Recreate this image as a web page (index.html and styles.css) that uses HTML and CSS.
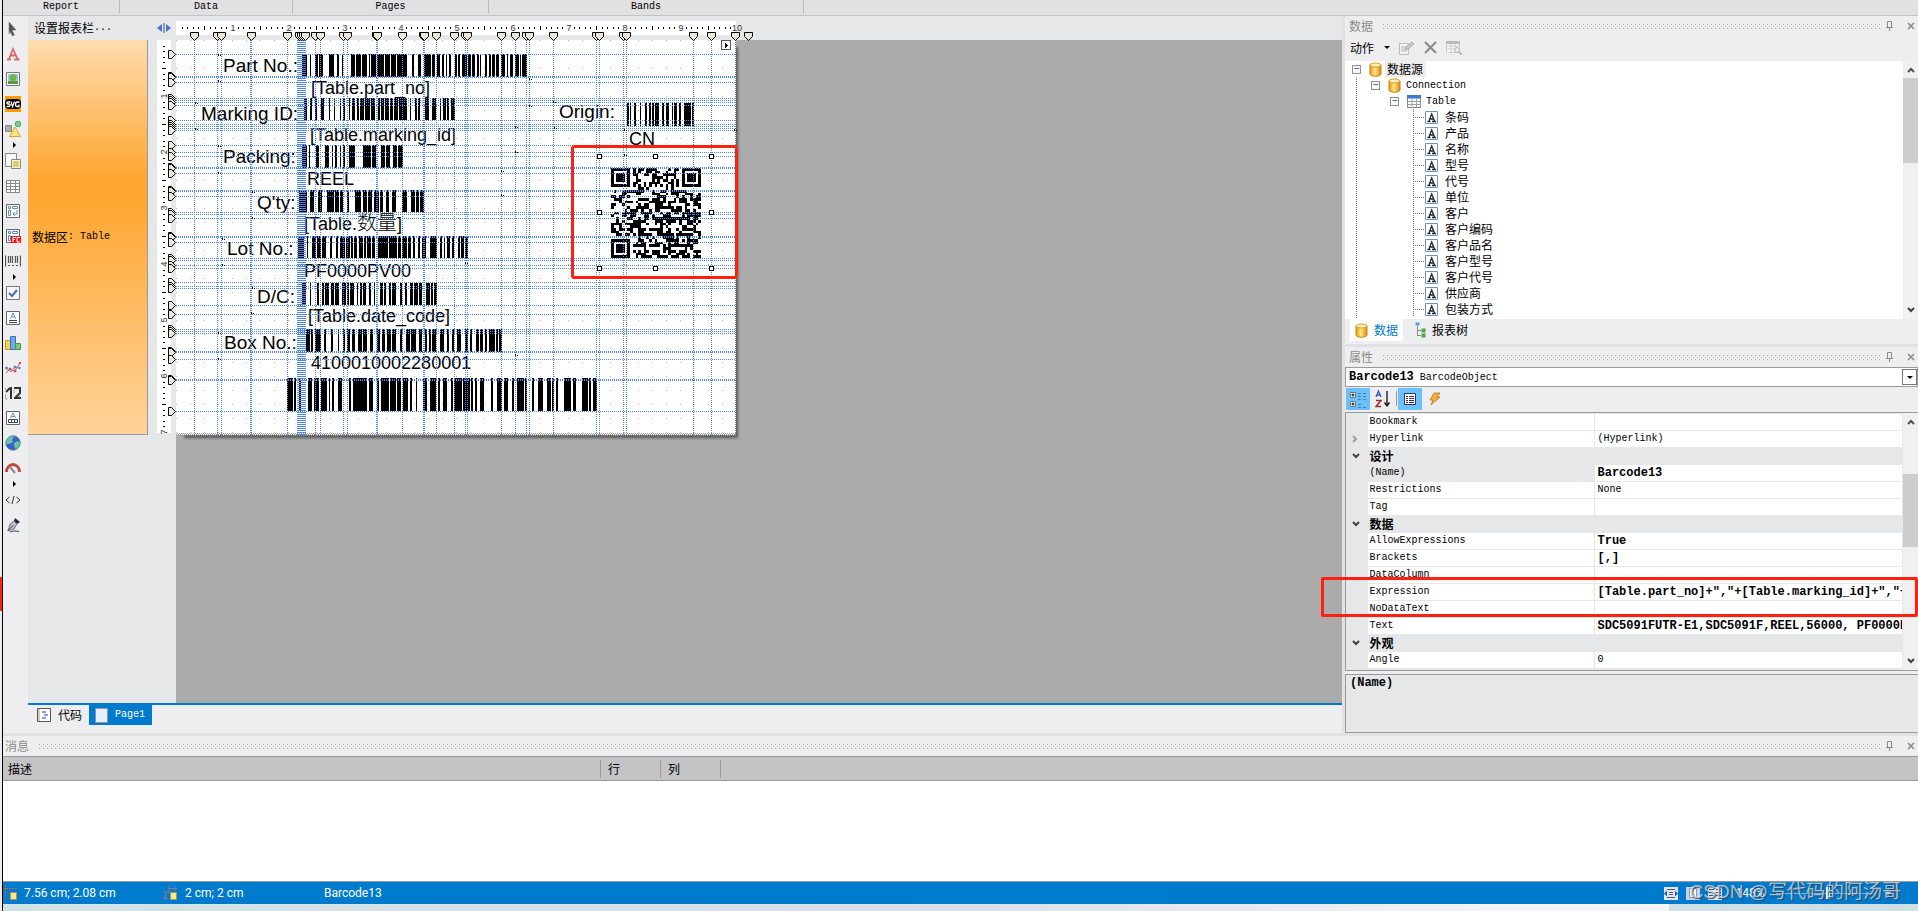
FILE: index.html
```html
<!DOCTYPE html>
<html lang="zh-CN">
<head>
<meta charset="utf-8">
<title>Report Designer</title>
<link rel="stylesheet" href="styles.css">
</head>
<body>
<svg class="defs" aria-hidden="true">
  <defs>
    <linearGradient id="gold" x1="0" x2="1"><stop offset="0" stop-color="#e59a10"/><stop offset=".45" stop-color="#ffe38a"/><stop offset="1" stop-color="#d98c0c"/></linearGradient>
    <symbol id="db" viewBox="0 0 13 15"><path d="M1 3v9c0 3 11 3 11 0V3z" fill="url(#gold)" stroke="#c9820c"/><ellipse cx="6.500" cy="3" rx="5.500" ry="2" fill="#fff0b8" stroke="#d9981c"/></symbol>
    <symbol id="field" viewBox="0 0 13 13"><path d="M.5 .5h12v12H.5z" fill="#fff" stroke="#6f93bd"/><path d="M2.500 10.500h3M7 10.500h4M4 10l2.700-7 2.800 7M5 8h3" fill="none" stroke="#1a2438" stroke-width="1.300"/></symbol>
    <symbol id="tbl" viewBox="0 0 14 13"><path d="M.5 .5h13v12H.5z" fill="#fff" stroke="#7d8794"/><path d="M0 0h14v3.500H0z" fill="#3f76d8"/><path d="M5 3v10M9.500 3v10M0 6.500h14M0 9.500h14" stroke="#98a2ae"/></symbol>
    <symbol id="pin" viewBox="0 0 7 10"><path d="M1.500 6V.5h4V6M0 6.500h7M3.500 7v3" fill="none" stroke="#8a8a8a"/></symbol>
    <symbol id="cross" viewBox="0 0 8 8"><path d="M1 1l6 6M7 1L1 7" stroke="#8a8a8a" stroke-width="1.500"/></symbol>
    <symbol id="up" viewBox="0 0 8 6"><path d="M1 5l3-3 3 3" fill="none" stroke="#505050" stroke-width="2"/></symbol>
    <symbol id="down" viewBox="0 0 8 6"><path d="M1 1l3 3 3-3" fill="none" stroke="#404040" stroke-width="2"/></symbol>
    <symbol id="right" viewBox="0 0 6 8"><path d="M1 1l3 3-3 3" fill="none" stroke="#a0a0a0" stroke-width="2"/></symbol>
  </defs>
</svg>
<div class="edge"><i></i></div>
<div class="app">
  <nav class="groups">
    <span class="g-report">Report</span><span class="g-data">Data</span><span class="g-pages">Pages</span><span class="g-bands">Bands</span>
  </nav>

  <main class="main">
    <div class="tools" role="toolbar" aria-label="Objects">
      <button aria-label="Select"><svg viewBox="0 0 16 16"><path d="M4 1l7 8-4 .3 2.500 4.700-2 1L5 10.500 4 13z" fill="#555" stroke="#777" stroke-width=".5"/></svg></button>
      <button aria-label="Text"><svg viewBox="0 0 16 16"><path d="M2 13.500h4M9 13.500h5.500M4 13L8 3l4.500 10M5.500 9.500h5" fill="none" stroke="#d9686a" stroke-width="1.800"/></svg></button>
      <button aria-label="Picture"><svg viewBox="0 0 16 16"><path d="M1.500 1.500h13v13h-13z" fill="#fff" stroke="#777"/><path d="M3 3h10v10H3z" fill="#9dc8ee"/><path d="M3 10h10v3H3z" fill="#5a9a3a"/><circle cx="8" cy="6.500" r="3.500" fill="#6cba45"/><path d="M8 9v3" stroke="#a86"/></svg></button>
      <button aria-label="SVG"><svg viewBox="0 0 16 16"><path d="M0 0h16v16H0z" fill="#ff9a00"/><rect y="3" width="16" height="10" rx="4" fill="#000"/><path d="M5 6H3c-1.500 0-1.500 2 0 2h1c1.500 0 1.500 2.500-.3 2.500H1.500M6 5.500l1.500 5L9.500 5.500M14.500 6H12c-2 0-2 4.500 0 4.500h2V8.500" fill="none" stroke="#fff" stroke-width="1.300"/></svg></button>
      <button aria-label="Shapes"><svg viewBox="0 0 16 16"><path d="M.5 4.500h6v6h-6z" fill="#aaa" stroke="#888"/><circle cx="13" cy="3" r="2.800" fill="#7ed08e" stroke="#4ca864"/><path d="M10 6l5.500 9.500h-11z" fill="#ffe27a" stroke="#d6a53c"/></svg></button>
      <button class="more" aria-label="More shapes"></button>
      <button aria-label="Subreport"><svg viewBox="0 0 16 16"><path d="M.5 .5h11v13H.5z" fill="#f8f8fa" stroke="#888"/><path d="M6.500 6.500h9v9h-9z" fill="#fff7b4" stroke="#888"/><path d="M8 9h6M8 11h6M8 13h6" stroke="#b5a044"/></svg></button>
      <button aria-label="Table"><svg viewBox="0 0 16 16"><path d="M1.500 2.500h13v12h-13zM1 5.500h14M1 8.500h14M1 11.500h14M5.500 2v12M10.500 2v12" fill="#fff" stroke="#888"/></svg></button>
      <button aria-label="Matrix"><svg viewBox="0 0 16 16"><path d="M1.500 1.500h13v13h-13z" fill="#fff" stroke="#666"/><path d="M3.500 3.500h2v2h-2zM7.500 3.500h5v2h-5zM3.500 7.500h2v5h-2zM12 7v4H8M9.500 9L8 11l2 2" fill="none" stroke="#5c8cc6"/></svg></button>
      <button aria-label="Advanced matrix"><svg viewBox="0 0 16 16"><path d="M1.500 1.500h13v13h-13z" fill="#fff" stroke="#666"/><path d="M3.500 3.500h2v2h-2zM7.500 3.500h5v2h-5zM3.500 7.500h2v5h-2z" fill="none" stroke="#5c8cc6"/><path d="M6 8h10v7H6z" fill="#f11"/><path d="M8 14V9.500h3M8 11.500h2M15 9.500h-3V14h3" fill="none" stroke="#fff"/></svg></button>
      <button aria-label="Barcode"><svg viewBox="0 0 16 16"><path d="M.5 2.500v11M3.500 3v7M5.500 3v7M7.500 3v7M10.500 3v7M12.500 3v7M15.500 2.500v11M3 12.500h2M7 12.500h2M11 12.500h2" stroke="#555" stroke-width="1.200"/></svg></button>
      <button class="more" aria-label="More barcodes"></button>
      <button aria-label="Check box"><svg viewBox="0 0 16 16"><path d="M1.500 1.500h13v13h-13z" fill="#f4f6fa" stroke="#777"/><path d="M4 8l3 3 5-6" fill="none" stroke="#4c6ea8" stroke-width="2"/></svg></button>
      <button aria-label="Rich text"><svg viewBox="0 0 16 16"><path d="M1.500 1.500h13v13h-13z" fill="#fff" stroke="#666"/><path d="M5.500 8.500L8 3l2.500 5.500M6.500 7h3" fill="none" stroke="#5c8cc6"/><path d="M4 10.500h8M4 12.500h8" stroke="#444"/></svg></button>
      <button aria-label="Chart"><svg viewBox="0 0 16 16"><path d="M.5 5.500h5v9h-5z" fill="#f6d255" stroke="#c89b20"/><path d="M5.500 1.500h5v13h-5z" fill="#6eaaf0" stroke="#3470bc"/><path d="M10.500 8.500h5v6h-5z" fill="#7ec87a" stroke="#469446"/></svg></button>
      <button aria-label="Sparkline"><svg viewBox="0 0 16 16"><path d="M1 13l4-4 5 2 5-8" fill="none" stroke="#e55" /><path d="M1 8l5 4 4-5 5 1" fill="none" stroke="#69c"/><g fill="#e44"><circle cx="5" cy="9" r="1.500"/><circle cx="10" cy="11" r="1.500"/><circle cx="15" cy="3" r="1.200"/></g><g fill="#58b"><circle cx="1.500" cy="8" r="1.500"/><circle cx="10" cy="7" r="1.500"/><circle cx="14.500" cy="8" r="1.200"/></g></svg></button>
      <button aria-label="Digits"><svg viewBox="0 0 16 16"><path d="M.5 9v5h2M.5 3v2M9 8V5M11 12l3-3v4" fill="none" stroke="#aaa"/><path d="M1 7l4-4M6 2v12M9 3h6v5l-5 5M9 13h7" fill="none" stroke="#333" stroke-width="2"/></svg></button>
      <button aria-label="Cellular text"><svg viewBox="0 0 16 16"><path d="M1.500 1.500h13v13h-13z" fill="#fff" stroke="#666"/><path d="M5.500 8L8 3l2.500 5M6.500 6.500h3" fill="none" stroke="#5c8cc6"/><path d="M3.500 9.500h9v3h-9zM6.500 9v4M9.500 9v4" fill="none" stroke="#444"/></svg></button>
      <button aria-label="Map"><svg viewBox="0 0 16 16"><circle cx="8" cy="8" r="7.200" fill="#3a5fd0" stroke="#4a8a80"/><path d="M3 3c2-2 5-2 6-1L7 5l1 2-4 2-3 0C1 6 2 4 3 3zM9 8l4-2 2 2c0 3-2 5-4 6l-2-3z" fill="#66c3a0"/></svg></button>
      <button aria-label="Gauge"><svg viewBox="0 0 16 16"><path d="M1.500 12a6.500 7.500 0 0 1 13 0" fill="none" stroke="#c0483c" stroke-width="2.800"/><path d="M5 7l5 6" stroke="#888" stroke-width="2"/></svg></button>
      <button class="more" aria-label="More gauges"></button>
      <button aria-label="HTML"><svg viewBox="0 0 16 16"><path d="M4.500 5L1 8l3.500 3M11.500 5L15 8l-3.500 3M9 4L7 12" fill="none" stroke="#333"/></svg></button>
      <button aria-label="Signature"><svg viewBox="0 0 16 16"><path d="M10 1l5 4-3 2-3-3z" fill="#1c2452"/><path d="M9 4l3 3-3 5-6 2 2-7z" fill="#b9bec6" stroke="#555" stroke-width=".7"/><path d="M3 13.500l5-5M5 15c4-1.500 6-1 9-.5" fill="none" stroke="#345"/></svg></button>
    </div>

    <section class="work">
      <div class="designer">
        <div class="bands">
          <button class="cfg"><span class="zh">设置报表栏</span><span>...</span></button>
          <div class="band"><span class="zh">数据区</span>: Table</div>
        </div>
        <div class="canvas">
          <svg class="sheet" viewBox="157 16 603 430" width="603" height="430">
            <defs>
              <pattern id="dots" x="176" y="40" width="14" height="14" patternUnits="userSpaceOnUse"><path d="M0 0h1v1H0z" fill="#b8b8b8"/></pattern>
              <pattern id="check" width="2" height="2" patternUnits="userSpaceOnUse"><path d="M0 0h1v1H0zM1 1h1v1H1z" fill="#999"/></pattern>
              <filter id="soft"><feGaussianBlur stdDeviation="1.500"/></filter>
            </defs>
            <path d="M184 47h554v391H184z" fill="#555" filter="url(#soft)"/>
            <g shape-rendering="crispEdges">
              <path d="M176 21h560v14H176zM157 40h14v393h-14z" fill="#fff"/>
              <path d="M176 40h560v395H176z" fill="#fff"/>
              <path d="M176 40h560v395H176z" fill="url(#dots)"/>
              <path d="M176 433h560v3H176z" fill="url(#check)"/>
              <g id="bars"></g>
              <g id="qr"></g>
            </g>
            <path d="M162 24v8l-5-4zM166 24v8l5-4z" fill="#3f76d0"/><path d="M164 23v10" stroke="#999" stroke-width="2"/>
            <g class="lbl">
              <text x="223" y="72">Part No.:</text><text x="201" y="120">Marking ID:</text><text x="223" y="163">Packing:</text>
              <text x="257" y="209">Q'ty:</text><text x="227" y="255">Lot No.:</text><text x="257" y="303">D/C:</text><text x="224" y="349">Box No.:</text>
              <text x="559" y="118">Origin:</text>
            </g>
            <g class="val">
              <text x="311" y="94">[Table.part_no]</text><text x="310" y="141">[Table.marking_id]</text><text x="307" y="185">REEL</text>
              <text x="304" y="230">[Table.<tspan class="big">数量</tspan>]</text><text x="304" y="277">PF0000PV00</text><text x="308" y="322">[Table.date_code]</text>
              <text x="311" y="369">4100010002280001</text><text x="629" y="145">CN</text>
            </g>
            <g id="guides" shape-rendering="crispEdges"></g>
            <g id="ticks" shape-rendering="crispEdges"></g>
            <g id="nums" class="num"></g>
            <g id="pins" fill="#ece8d8" stroke="#000"></g>
            <g shape-rendering="crispEdges">
              <path d="M721.500 40.500h9v9h-9z" fill="#fff" stroke="#555"/><path d="M725 43v5l3-2.500z"/>
            </g>
            <g id="handles" fill="#fff" stroke="#000" shape-rendering="crispEdges"></g>
            <rect x="572.500" y="146.500" width="164" height="131" rx="2" fill="none" stroke="#ff2010" stroke-width="3"/>
          </svg>
        </div>
      </div>
      <div class="tabs">
        <button class="tab"><svg viewBox="0 0 14 14" width="14" height="14"><path d="M.5 .5h13v13H.5z" fill="#fff" stroke="#555"/><path d="M1 1h2v12H1z" fill="#d8d0a0"/><path d="M5 4h4M7 7h4M5 10h4" stroke="#23f"/></svg><span class="zh">代码</span></button>
        <button class="tab on"><svg viewBox="0 0 13 15" width="13" height="15"><path d="M.5 .5h12v14H.5z" fill="#e8eefa" stroke="#8a96a8"/></svg>Page1</button>
      </div>
    </section>

    <aside class="side">
      <section class="panel data">
        <header class="head"><h2>数据</h2><i></i><svg width="7" height="10"><use href="#pin"/></svg><svg width="8" height="8"><use href="#cross"/></svg></header>
        <div class="bar">
          <button class="act"><span class="zh">动作</span><b></b></button>
          <button aria-label="Edit"><svg viewBox="0 0 16 14" width="16" height="14"><path d="M.5 2.500h9v11h-9z" fill="#f4f4f4" stroke="#bbb"/><path d="M2 6h5M2 8h4M2 10h6" stroke="#bbb"/><path d="M6 9l1-3 6-5 2 2-6 5z" fill="#ccc" stroke="#aaa"/></svg></button>
          <button aria-label="Delete"><svg viewBox="0 0 13 13" width="13" height="13"><path d="M1 1l11 11M12 1L1 12" stroke="#8a8a8a" stroke-width="2"/></svg></button>
          <button aria-label="View"><svg viewBox="0 0 16 14" width="16" height="14"><path d="M.5 .5h13v11H.5zM0 5h14M0 8h14M5 3v9M9 3v9" fill="#fafafa" stroke="#ccc"/><path d="M0 0h14v3H0z" fill="#bbb"/><circle cx="11" cy="9" r="2.500" fill="#eee" stroke="#bbb"/><path d="M13 11l3 3" stroke="#bbb" stroke-width="2"/></svg></button>
        </div>
        <div class="scroller">
          <ul class="tree">
            <li class="l0"><button aria-label="Collapse">−</button><svg width="13" height="15"><use href="#db"/></svg><span class="zh sel">数据源</span></li>
            <li class="l1"><button aria-label="Collapse">−</button><svg width="13" height="15"><use href="#db"/></svg><span>Connection</span></li>
            <li class="l2"><button aria-label="Collapse">−</button><svg width="14" height="13"><use href="#tbl"/></svg><span>Table</span></li>
            <li class="leaf"><svg width="13" height="13"><use href="#field"/></svg><span>条码</span></li>
            <li class="leaf"><svg width="13" height="13"><use href="#field"/></svg><span>产品</span></li>
            <li class="leaf"><svg width="13" height="13"><use href="#field"/></svg><span>名称</span></li>
            <li class="leaf"><svg width="13" height="13"><use href="#field"/></svg><span>型号</span></li>
            <li class="leaf"><svg width="13" height="13"><use href="#field"/></svg><span>代号</span></li>
            <li class="leaf"><svg width="13" height="13"><use href="#field"/></svg><span>单位</span></li>
            <li class="leaf"><svg width="13" height="13"><use href="#field"/></svg><span>客户</span></li>
            <li class="leaf"><svg width="13" height="13"><use href="#field"/></svg><span>客户编码</span></li>
            <li class="leaf"><svg width="13" height="13"><use href="#field"/></svg><span>客户品名</span></li>
            <li class="leaf"><svg width="13" height="13"><use href="#field"/></svg><span>客户型号</span></li>
            <li class="leaf"><svg width="13" height="13"><use href="#field"/></svg><span>客户代号</span></li>
            <li class="leaf"><svg width="13" height="13"><use href="#field"/></svg><span>供应商</span></li>
            <li class="leaf"><svg width="13" height="13"><use href="#field"/></svg><span>包装方式</span></li>
          </ul>
          <div class="vs"><svg width="8" height="6"><use href="#up"/></svg><b class="t1"></b><svg width="8" height="6"><use href="#down"/></svg></div>
        </div>
        <div class="ptabs">
          <button class="on"><svg width="13" height="15"><use href="#db"/></svg>数据</button>
          <button><svg viewBox="0 0 11 16" width="11" height="16"><path d="M2.500 4v10M3 8.500h3M3 13.500h3" fill="none" stroke="#888"/><path d="M.5 .5h4v3h-4z" fill="#5b9be8"/><path d="M6.500 6.500h4v4h-4zM6.500 11.500h4v4h-4z" fill="#4aa84a"/></svg>报表树</button>
        </div>
      </section>

      <section class="panel props">
        <header class="head"><h2>属性</h2><i></i><svg width="7" height="10"><use href="#pin"/></svg><svg width="8" height="8"><use href="#cross"/></svg></header>
        <button class="combo"><span><b>Barcode13</b> BarcodeObject</span><i></i></button>
        <div class="pbar">
          <button class="on" aria-label="Categorized"><svg viewBox="0 0 18 18" width="18" height="18"><path d="M1.500 2.500h5v5h-5zM1.500 11.500h5v5h-5z" fill="#fff" stroke="#777"/><path d="M2.500 5h3M4 3.500v3M2.500 14h3M4 12.500v3" stroke="#000"/><path d="M9 3.500h3M14 3.500h3M9 6.500h3M14 6.500h3M9 9.500h3M14 9.500h3M9 14.500h3M9 17.500h3M14 17.500h3" stroke="#4c80a8"/></svg></button>
          <button aria-label="Alphabetical"><svg viewBox="0 0 16 18" width="16" height="18"><path d="M1 7l2.500-6L6 7M2 5h3" fill="none" stroke="#2a56c0" stroke-width="1.300"/><path d="M1 10.500h5l-5 6h5" fill="none" stroke="#a02828" stroke-width="1.500"/><path d="M12 1v14M9.500 12.500L12 16l2.500-3.500" fill="none" stroke="#111" stroke-width="1.300"/></svg></button>
          <i></i>
          <button class="on" aria-label="Properties"><svg viewBox="0 0 14 14" width="14" height="14"><path d="M1.500 1.500h11v11h-11z" fill="#fff" stroke="#335"/><path d="M3 4.500h2M6 4.500h5M3 6.500h2M6 6.500h5M3 8.500h2M6 8.500h5M3 10.500h2M6 10.500h5" stroke="#335"/></svg></button>
          <button aria-label="Events"><svg viewBox="0 0 12 14" width="12" height="14"><path d="M5 1h6L8 5h3L2 13l2-5H1z" fill="#ffb02e" stroke="#b5651d" stroke-width=".7"/></svg></button>
        </div>
        <div class="gridbox">
          <table class="grid">
            <tbody>
            <tr><th></th><td>Bookmark</td><td></td></tr>
            <tr><th><svg width="6" height="8"><use href="#right"/></svg></th><td>Hyperlink</td><td>(Hyperlink)</td></tr>
            <tr class="cat"><th><svg width="8" height="6"><use href="#down"/></svg></th><td colspan="2">设计</td></tr>
            <tr class="cur"><th></th><td>(Name)</td><td><b>Barcode13</b></td></tr>
            <tr><th></th><td>Restrictions</td><td>None</td></tr>
            <tr><th></th><td>Tag</td><td></td></tr>
            <tr class="cat"><th><svg width="8" height="6"><use href="#down"/></svg></th><td colspan="2">数据</td></tr>
            <tr><th></th><td>AllowExpressions</td><td><b>True</b></td></tr>
            <tr><th></th><td>Brackets</td><td><b>[,]</b></td></tr>
            <tr><th></th><td>DataColumn</td><td></td></tr>
            <tr><th></th><td>Expression</td><td><b>[Table.part_no]+","+[Table.marking_id]+","+"</b></td></tr>
            <tr><th></th><td>NoDataText</td><td></td></tr>
            <tr><th></th><td>Text</td><td><b>SDC5091FUTR-E1,SDC5091F,REEL,56000, PF0000PV00</b></td></tr>
            <tr class="cat"><th><svg width="8" height="6"><use href="#down"/></svg></th><td colspan="2">外观</td></tr>
            <tr><th></th><td>Angle</td><td>0</td></tr>
            </tbody>
          </table>
          <div class="vs"><svg width="8" height="6"><use href="#up"/></svg><b class="t2"></b><svg width="8" height="6"><use href="#down"/></svg></div>
          <div class="mark"></div>
        </div>
        <div class="help"><b>(Name)</b></div>
      </section>
    </aside>
  </main>

  <section class="msgs">
    <header class="head"><h2>消息</h2><i></i><svg width="7" height="10"><use href="#pin"/></svg><svg width="8" height="8"><use href="#cross"/></svg></header>
    <table class="log"><thead><tr><th class="c1">描述</th><th class="c2">行</th><th class="c2">列</th><th></th></tr></thead></table>
  </section>

  <footer class="status">
    <span class="s1"><svg viewBox="0 0 14 16" width="14" height="16"><path d="M2.500 0v16M0 3.500h14" stroke="#b06a50" stroke-dasharray="2 1"/><path d="M7.500 7.500h6v7h-6z" fill="#ffe98a" stroke="#a8955a"/></svg>7.56 cm; 2.08 cm</span>
    <span class="s2"><svg viewBox="0 0 15 16" width="15" height="16"><path d="M6 3.500h8M11 1l3 2.500L11 6M2.500 7v8M0 12l2.500 3L5 12M6 0v7M0 7h7" fill="none" stroke="#8a7a80"/><path d="M7.500 7.500h6v7h-6z" fill="#ffe98a" stroke="#a8955a"/></svg>2 cm; 2 cm</span>
    <span class="s3">Barcode13</span>
    <span class="zoom">
      <button aria-label="Page width"><svg viewBox="0 0 14 13" width="14" height="13"><path d="M0 0h14v13H0z" fill="#dfe6f2"/><path d="M3 2.500h8M3 10.500h8M5 5.500h4M5 7.500h4" stroke="#556"/><path d="M0 6.500l3-3v6zM14 6.500l-3-3v6z" fill="#2458b8"/></svg></button>
      <button aria-label="Whole page"><svg viewBox="0 0 14 13" width="14" height="13"><path d="M0 0h14v13H0z" fill="#c8d4ea"/><path d="M3.500 1.500h7v9h-7z" fill="#fff" stroke="#89a"/></svg></button>
      <button aria-label="Actual size"><svg viewBox="0 0 14 13" width="14" height="13"><path d="M0 0h14v13H0z" fill="#dfe6f2"/><path d="M1 2.500h5M8 2.500h5M1 5.500h5M8 5.500h5M1 8.500h5M8 8.500h5" stroke="#456"/></svg></button>
      <span class="pct">148%</span>
      <input type="range" min="0" max="100" value="52" aria-label="Zoom"><b>+</b>
    </span>
    <span class="wm">CSDN @写代码的阿汤哥</span>
  </footer>
  <div class="desk"></div>
</div>
<script src="app.js"></script>
</body>
</html>
```
FILE: styles.css
```css
* { box-sizing: border-box; }
body {
  margin: 0; height: 100vh; overflow: hidden; display: grid; grid-template-columns: 3px 1fr;
  font: 10px/16px "Liberation Mono", "Noto Sans CJK SC", monospace; color: #000; background: #eeeef0;
}
button { font: inherit; color: inherit; background: none; border: 0; padding: 0; margin: 0; display: flex; align-items: center; }
svg { flex: none; display: block; }
h2, ul { margin: 0; padding: 0; font-weight: normal; list-style: none; }
.defs { position: absolute; width: 0; height: 0; }
.zh, h2, .leaf, .ptabs, .cat, .log { font-family: "Noto Sans CJK SC", sans-serif; font-size: 12px; }

.edge { background: #ececee; border-right: 1px solid #000; padding-top: 577px; }
.edge i { display: block; height: 34px; background: #f21; }
.app { display: flex; flex-direction: column; min-width: 0; height: 100vh; }

.groups { display: flex; height: 16px; background: #e1e1e4; border-bottom: 1px solid #c4c4c7; line-height: 13px; text-align: center; flex: none; }
.groups span { border-right: 1px solid #bbbbbe; height: 13px; }
.g-report { width: 117px; } .g-data { width: 173px; } .g-pages { width: 196px; } .g-bands { width: 315px; }

.main { flex: 1; display: flex; min-height: 0; background: #eeeef0; border-bottom: 3px solid #e1e1e4; }
.tools { width: 25px; display: flex; flex-direction: column; background: #eeeef1; }
.tools button { width: 20px; height: 25px; justify-content: center; }
.tools button svg { width: 16px; height: 16px; }
.tools .more { height: 7px; width: 22px; }
.more::after { content: ""; border: 3px solid transparent; border-left-color: #000; border-right: 0; }

.work { flex: 1; min-width: 0; display: flex; flex-direction: column; }
.designer { flex: 1; display: flex; min-height: 0; border-bottom: 2px solid #007acc; background: #e6e7e9; }
.bands { width: 129px; }
.cfg { height: 24px; padding-left: 6px; }
.band { width: 120px; height: 395px; padding-left: 4px; display: flex; align-items: center; border-right: 1px solid #999; border-bottom: 1px solid #999; background: linear-gradient(#ffdcb0, #ffa630 35%, #ffa630 40%, #ffd39b); }
.canvas { flex: 1; overflow: hidden; background: linear-gradient(#ababab, #ababab) 19px 24px no-repeat; }
.sheet { display: block; }
.lbl { font: 19px "Liberation Sans", Arial, sans-serif; }
.val { font: 18px "Liberation Sans", "Noto Sans CJK SC", sans-serif; }
.big { font-size: 20px; font-weight: 300; }
.num { font: 9px "Liberation Sans", sans-serif; fill: #333; text-anchor: middle; }
.tabs { display: flex; height: 28px; padding-left: 3px; }
.tab { height: 20px; padding: 0 7px 0 6px; gap: 7px; }
.tab.on { background: #007acc; color: #fff; }

.side { width: 576px; flex: none; border-left: 3px solid #e1e1e4; display: flex; flex-direction: column; }
.data { border-bottom: 3px solid #e1e1e4; }
.head { display: flex; align-items: center; height: 20px; padding-right: 3px; gap: 14px; }
.head h2 { color: #8c8c8c; padding-left: 4px; line-height: 20px; }
.head i { flex: 1; height: 5px; margin-right: -8px; margin-left: -4px; background: conic-gradient(at 1px 1px, transparent 75%, #a8a8aa 0) 0 0 / 4px 4px, conic-gradient(at 1px 1px, transparent 75%, #a8a8aa 0) 2px 2px / 4px 4px; }
.bar { display: flex; align-items: center; height: 25px; padding: 0 0 2px 5px; gap: 9px; }
.act { gap: 10px; }
.act b { border: 3px solid transparent; border-top-color: #000; border-bottom: 0; }
.scroller { display: flex; height: 258px; background: #fff; }
.tree { flex: 1; overflow: hidden; background: repeating-linear-gradient(#777 0 1px, transparent 1px 2px) 11px 16px / 1px 100% no-repeat; }
.tree li { display: flex; align-items: center; height: 16px; }
.tree li span { padding-left: 5px; white-space: pre; }
.tree .l1 span, .tree .l2 span { padding-top: 2px; }
.tree .leaf span { padding-left: 7px; }
.tree .sel { background: #efefef; padding: 0 3px 0 2px; margin-left: 3px; line-height: 16px; }
.tree button { width: 9px; height: 9px; border: 1px solid #919191; justify-content: center; line-height: 7px; color: #24489c; margin-right: 8px; background: #fafafa; }
.l0 { padding-left: 7px; } .l1 { padding-left: 26px; } .l2 { padding-left: 45px; }
.leaf { margin-left: 68px; background: repeating-linear-gradient(#777 0 1px, transparent 1px 2px) 0 0 / 1px 100% no-repeat, repeating-linear-gradient(90deg, #777 0 1px, transparent 1px 2px) 0 8px / 11px 1px no-repeat; padding-left: 12px; }
.vs { width: 15px; background: #f0f0f0; display: flex; flex-direction: column; align-items: center; padding: 6px 0; }
.vs b { width: 100%; background: #cdcdcd; margin: 5px 0 auto; }
.t1 { height: 85px; }
.vs .t2 { height: 73px; margin-top: 49px; }
.ptabs { display: flex; height: 25px; padding-left: 5px; gap: 7px; }
.ptabs button { height: 22px; gap: 6px; padding: 0 5px; }
.ptabs .on { background: #fff; color: #007acc; }

.props { flex: 1; display: flex; flex-direction: column; min-height: 0; }
.combo { height: 20px; border: 1px solid #999; background: #fff; justify-content: space-between; padding-left: 3px; flex: none; }
.combo b, .grid td b, .help b { font-size: 12px; }
.combo i { width: 15px; height: 16px; border: 1px solid #777; display: flex; align-items: center; justify-content: center; }
.combo i::after { content: ""; border: 3px solid transparent; border-top-color: #000; border-bottom: 0; }
.pbar { display: flex; align-items: center; height: 25px; padding-left: 1px; padding-bottom: 2px; gap: 1px; flex: none; }
.pbar button { width: 24px; height: 22px; justify-content: center; }
.pbar i { width: 1px; height: 15px; background: #999; }
.pbar .on { background: #6bc1ff; }
.gridbox { position: relative; display: flex; height: 259px; border: 1px solid #999; border-right: 0; background: #e6e7e9; flex: none; }
.grid { flex: 1; width: 100%; table-layout: fixed; border-collapse: collapse; align-self: flex-start; min-width: 0; }
.grid tr { height: 17px; }
.grid th { width: 21px; padding: 0 6px; border: 0; }
.grid td { padding: 0 0 0 3px; border: 1px solid #e6e7e9; background: #fff; white-space: nowrap; overflow: hidden; line-height: 14px; height: 17px; }
.grid td:nth-child(2) { width: 227px; padding-left: 2px; }
.grid .cat td, .grid .cur td:nth-child(2) { background: #e6e7e9; }
.grid .cat { font-weight: bold; }
.grid td b { display: block; line-height: 14px; }
.mark { position: absolute; left: -25px; right: 0; top: 164px; height: 40px; border: 3px solid #ff2010; border-radius: 2px; }
.help { flex: 1; margin-top: 3px; border: 1px solid #999; border-right: 0; background: #e6e7e9; padding: 0 4px; }

.msgs { height: 146px; flex: none; background: #fff; border-bottom: 1px solid #999; }
.msgs .head { background: #eeeef0; }
.msgs h2 { padding-left: 2px; }
.log { width: 100%; border-collapse: collapse; table-layout: fixed; background: #c4c4c6; border-top: 1px solid #999; border-bottom: 1px solid #999; }
.log th { height: 24px; padding: 0 5px; font-weight: normal; text-align: left; background: linear-gradient(#999, #999) right center / 1px 18px no-repeat; }
.log .c2 { padding-left: 7px; }
.log th:last-child { background: none; }
.c1 { width: 598px; } .c2 { width: 60px; }

.status { position: relative; display: flex; align-items: center; height: 22px; flex: none; background: #007acc; color: #fff; font: 12px/22px Roboto, "Open Sans", sans-serif; white-space: nowrap; }
.status span { display: flex; align-items: center; gap: 7px; }
.s1 { width: 160px; } .s2 { width: 161px; }
.zoom { margin-left: auto; padding-right: 27px; }
.status .zoom { gap: 8px; }
.pct { width: 38px; padding-left: 5px; }
.zoom input { appearance: none; width: 100px; height: 1px; background: #7fb8e0; margin: 0; }
.zoom input::-webkit-slider-thumb { appearance: none; width: 4px; height: 12px; background: #fff; }
.status .wm { position: absolute; right: 17px; top: -3px; font: 19px/26px "Liberation Sans", "Noto Sans CJK SC", sans-serif; color: rgba(225, 235, 245, .7); text-shadow: 1px 1px 1px #345; }
.desk { height: 7px; flex: none; background: linear-gradient(90deg, #cfe3e5, #dcdfe8 50%, #f3f4f6 78%, #f3f4f6 87%, #cfdfe6 87%); }
```
FILE: app.js
```js
const NS = 'http://www.w3.org/2000/svg';
const add = (id, tag, attrs, text) => {
  const el = document.createElementNS(NS, tag);
  for (const k in attrs) el.setAttribute(k, attrs[k]);
  if (text !== undefined) el.textContent = text;
  document.getElementById(id).appendChild(el);
};

// Barcodes: origin, top, bottom, bar runs in thirds of a pixel
const codes = [
  [160, 54, 77, '426-441 450-453 466-473 478-488 508-511 514-522 532-535 547-549 572-577 580-583 587-603 607-620 626-629 634-646 652-672 676-690 693-706 711-724 727-741 757-762 775-783 792-811 815-825 831-840 846-851 858-861 867-871 884-889 893-898 907-919 923-931 935-943 951-955 960-963 975-979 987-991 996-1004 1007-1015 1024-1033 1040-1043 1051-1058 1064-1075 1080-1083 1087-1100'],
  [160, 98, 120, '432-441 450-454 466-470 484-492 507-510 522-525 540-543 550-553 566-569 577-583 592-595 601-611 614-629 632-643 655-659 663-670 674-685 690-697 702-712 716-724 727-741 750-753 766-769 775-780 795-806 817-828 840-843 850-856 862-866 873-883'],
  [160, 145, 168, '426-440 447-450 468-476 495-506 516-519 525-530 540-543 550-553 568-577 580-583 610-619 622-633 636-646 663-675 678-688 700-710 714-718 721-727'],
  [160, 190, 212, '418-441 451-462 474-486 501-508 511-521 525-535 540-549 560-565 585-603 609-619 624-634 642-656 661-668 679-685 696-706 727-739 753-763 767-777 780-790'],
  [160, 236, 258, '415-432 441-444 456-468 471-483 487-497 510-515 528-532 540-553 558-568 573-578 582-590 598-608 612-618 622-632 636-643 654-670 673-684 687-697 700-710 714-722 727-741 745-753 760-765 775-779 786-797 810-829 841-844 851-855 862-869 877-882 894-899 903-911 915-922'],
  [160, 283, 305, '427-436 450-453 471-476 487-491 495-506 512-520 526-536 547-556 560-566 570-581 590-594 600-605 609-618 628-632 642-645 660-668 673-677 687-691 696-706 721-724 736-740 750-758 763-772 776-786 798-810 814-817 822-829'],
  [160, 329, 352, '438-449 454-458 466-481 491-497 513-519 533-537 549-553 560-570 577-583 594-604 608-620 629-638 652-658 666-674 680-691 697-706 720-726 738-748 752-768 776-786 796-800 806-812 817-827 840-850 860-866 877-882 891-901 914-924 930-936 949-955 961-967 975-980 988-1005 1008-1013 1017-1026'],
  [270, 378, 411, '52-68 71-76 87-93 114-126 132-147 152-171 177-180 186-192 204-216 237-243 249-271 274-291 297-309 322-327 333-355 360-376 381-393 399-414 420-426 438-441 459-470 480-498 504-510 519-531 543-549 552-576 580-600 603-607 614-621 630-642 663-669 681-696 702-714 726-732 741-761 765-771 786-792 804-819 831-843 846-851 858-863 882-903 909-918 936-954 957-962 969-981'],
  [530, 103, 126, '291-295 299-302 313-316 329-332 345-350 358-362 367-372 375-387 396-402 408-417 425-429 433-439 448-453 462-475 478-482 486-490']
];
for (const [ox, top, bottom, runs] of codes) {
  const d = runs.split(' ').map(r => {
    const [s, e] = r.split('-').map(v => ox + v / 3);
    const a = Math.round(s), b = Math.ceil(e);
    return `M${a} ${top}H${b}V${bottom}H${a}z`;
  }).join('');
  add('bars', 'path', { d });
}

// QR symbol, 33 modules on a 90px square
const N = 33, px = i => Math.round(i * 90 / N);
let seed = 7, q = '';
const rnd = () => (seed = (seed * 1103515245 + 12345) % 2147483648) / 2147483648;
const finder = (r, c) => {
  const m = Math.max(Math.abs(r - 3), Math.abs(c - 3));
  return m > 4 ? -1 : m === 3 || m < 2 ? 1 : 0;
};
for (let r = 0; r < N; r++) for (let c = 0; c < N; c++) {
  let v = rnd() < .52 ? 1 : 0;
  for (const f of [finder(r, c), finder(r, N - 1 - c), finder(N - 1 - r, c)]) if (f >= 0) v = f;
  const a = Math.max(Math.abs(r - 26), Math.abs(c - 26));
  if (a < 3) v = a === 1 ? 0 : 1;
  if ((r === 6 && c > 7 && c < 25) || (c === 6 && r > 7 && r < 25)) v = (r + c + 1) % 2;
  if (v) q += `M${611 + px(c)} ${168 + px(r)}H${611 + px(c + 1)}V${168 + px(r + 1)}H${611 + px(c)}z`;
}
add('qr', 'path', { d: q });

// Guides
const xs = [194, 217, 221, 250, 251, 287, 315, 320, 343, 347, 376, 377, 402, 423, 424, 436, 454, 465, 467, 501, 515, 526, 529, 553, 596, 599, 623, 626, 693, 711, 735];
const ys = [54, 76, 77, 82, 98, 100, 102, 105, 120, 124, 126, 128, 130, 145, 152, 156, 167, 168, 173, 190, 191, 196, 212, 214, 218, 236, 237, 242, 258, 260, 265, 268, 282, 286, 288, 305, 314, 329, 331, 333, 351, 352, 359, 379, 380, 411];
const blue = '#4f86e8';
for (let x = 297; x < 306; x++) add('guides', 'path', { d: `M${x}.500 40V435`, stroke: blue, 'stroke-dasharray': '1 1' });
for (const x of xs) add('guides', 'path', { d: `M${x}.500 40V435`, stroke: blue, 'stroke-dasharray': '1 1' });
for (const y of ys) add('guides', 'path', { d: `M176 ${y}.500H736`, stroke: blue, 'stroke-dasharray': '1 1' });

// Corner marks of text objects
for (const [x, y] of [[218, 54], [218, 80], [195, 102], [195, 128], [218, 145], [218, 172], [252, 191], [252, 217], [222, 238], [222, 264], [252, 287], [218, 332], [218, 358], [251, 312], [529, 78], [529, 105], [553, 101], [554, 127], [515, 126], [515, 151], [501, 170], [501, 194], [465, 262], [515, 354], [624, 154], [624, 129], [734, 129]])
  add('guides', 'path', { d: `M${x} ${y}h1v2h-1zM${x + 2} ${y + 1}h1v1h-1z` });

// Rulers
for (let i = 1; i < 100; i++) {
  if (i % 10 === 0) continue;
  const p = Math.round(i * 5.6), h = i % 5 ? 1 : 2;
  add('ticks', 'path', { d: `M${176 + p} ${28 - h}h1v${2 * h}h-1z` });
  if (i < 70) add('ticks', 'path', { d: `M${164 - h} ${40 + p}h${2 * h}v1h-${2 * h}z` });
}
for (let i = 1; i <= 10; i++) add('nums', 'text', { x: 177 + i * 56, y: 31 }, i);
for (let i = 1; i < 8; i++) add('nums', 'text', { transform: `translate(167 ${40 + i * 56}) rotate(-90)` }, i);
for (const x of [...xs.filter(x => x !== 250), 299, 301, 303, 305, 748])
  add('pins', 'path', { d: `M${x - 4}.500 32.500h8v4l-4 4-4-4z` });
for (const y of ys) add('pins', 'path', { d: `M168.500 ${y - 4}.500v8h3l4-4-4-4z` });

// Selection handles
for (const x of [599, 655, 711]) for (const y of [156, 212, 268])
  if (x !== 655 || y !== 212) add('handles', 'rect', { x: x - 1.5, y: y - 1.5, width: 4, height: 4 });
```
